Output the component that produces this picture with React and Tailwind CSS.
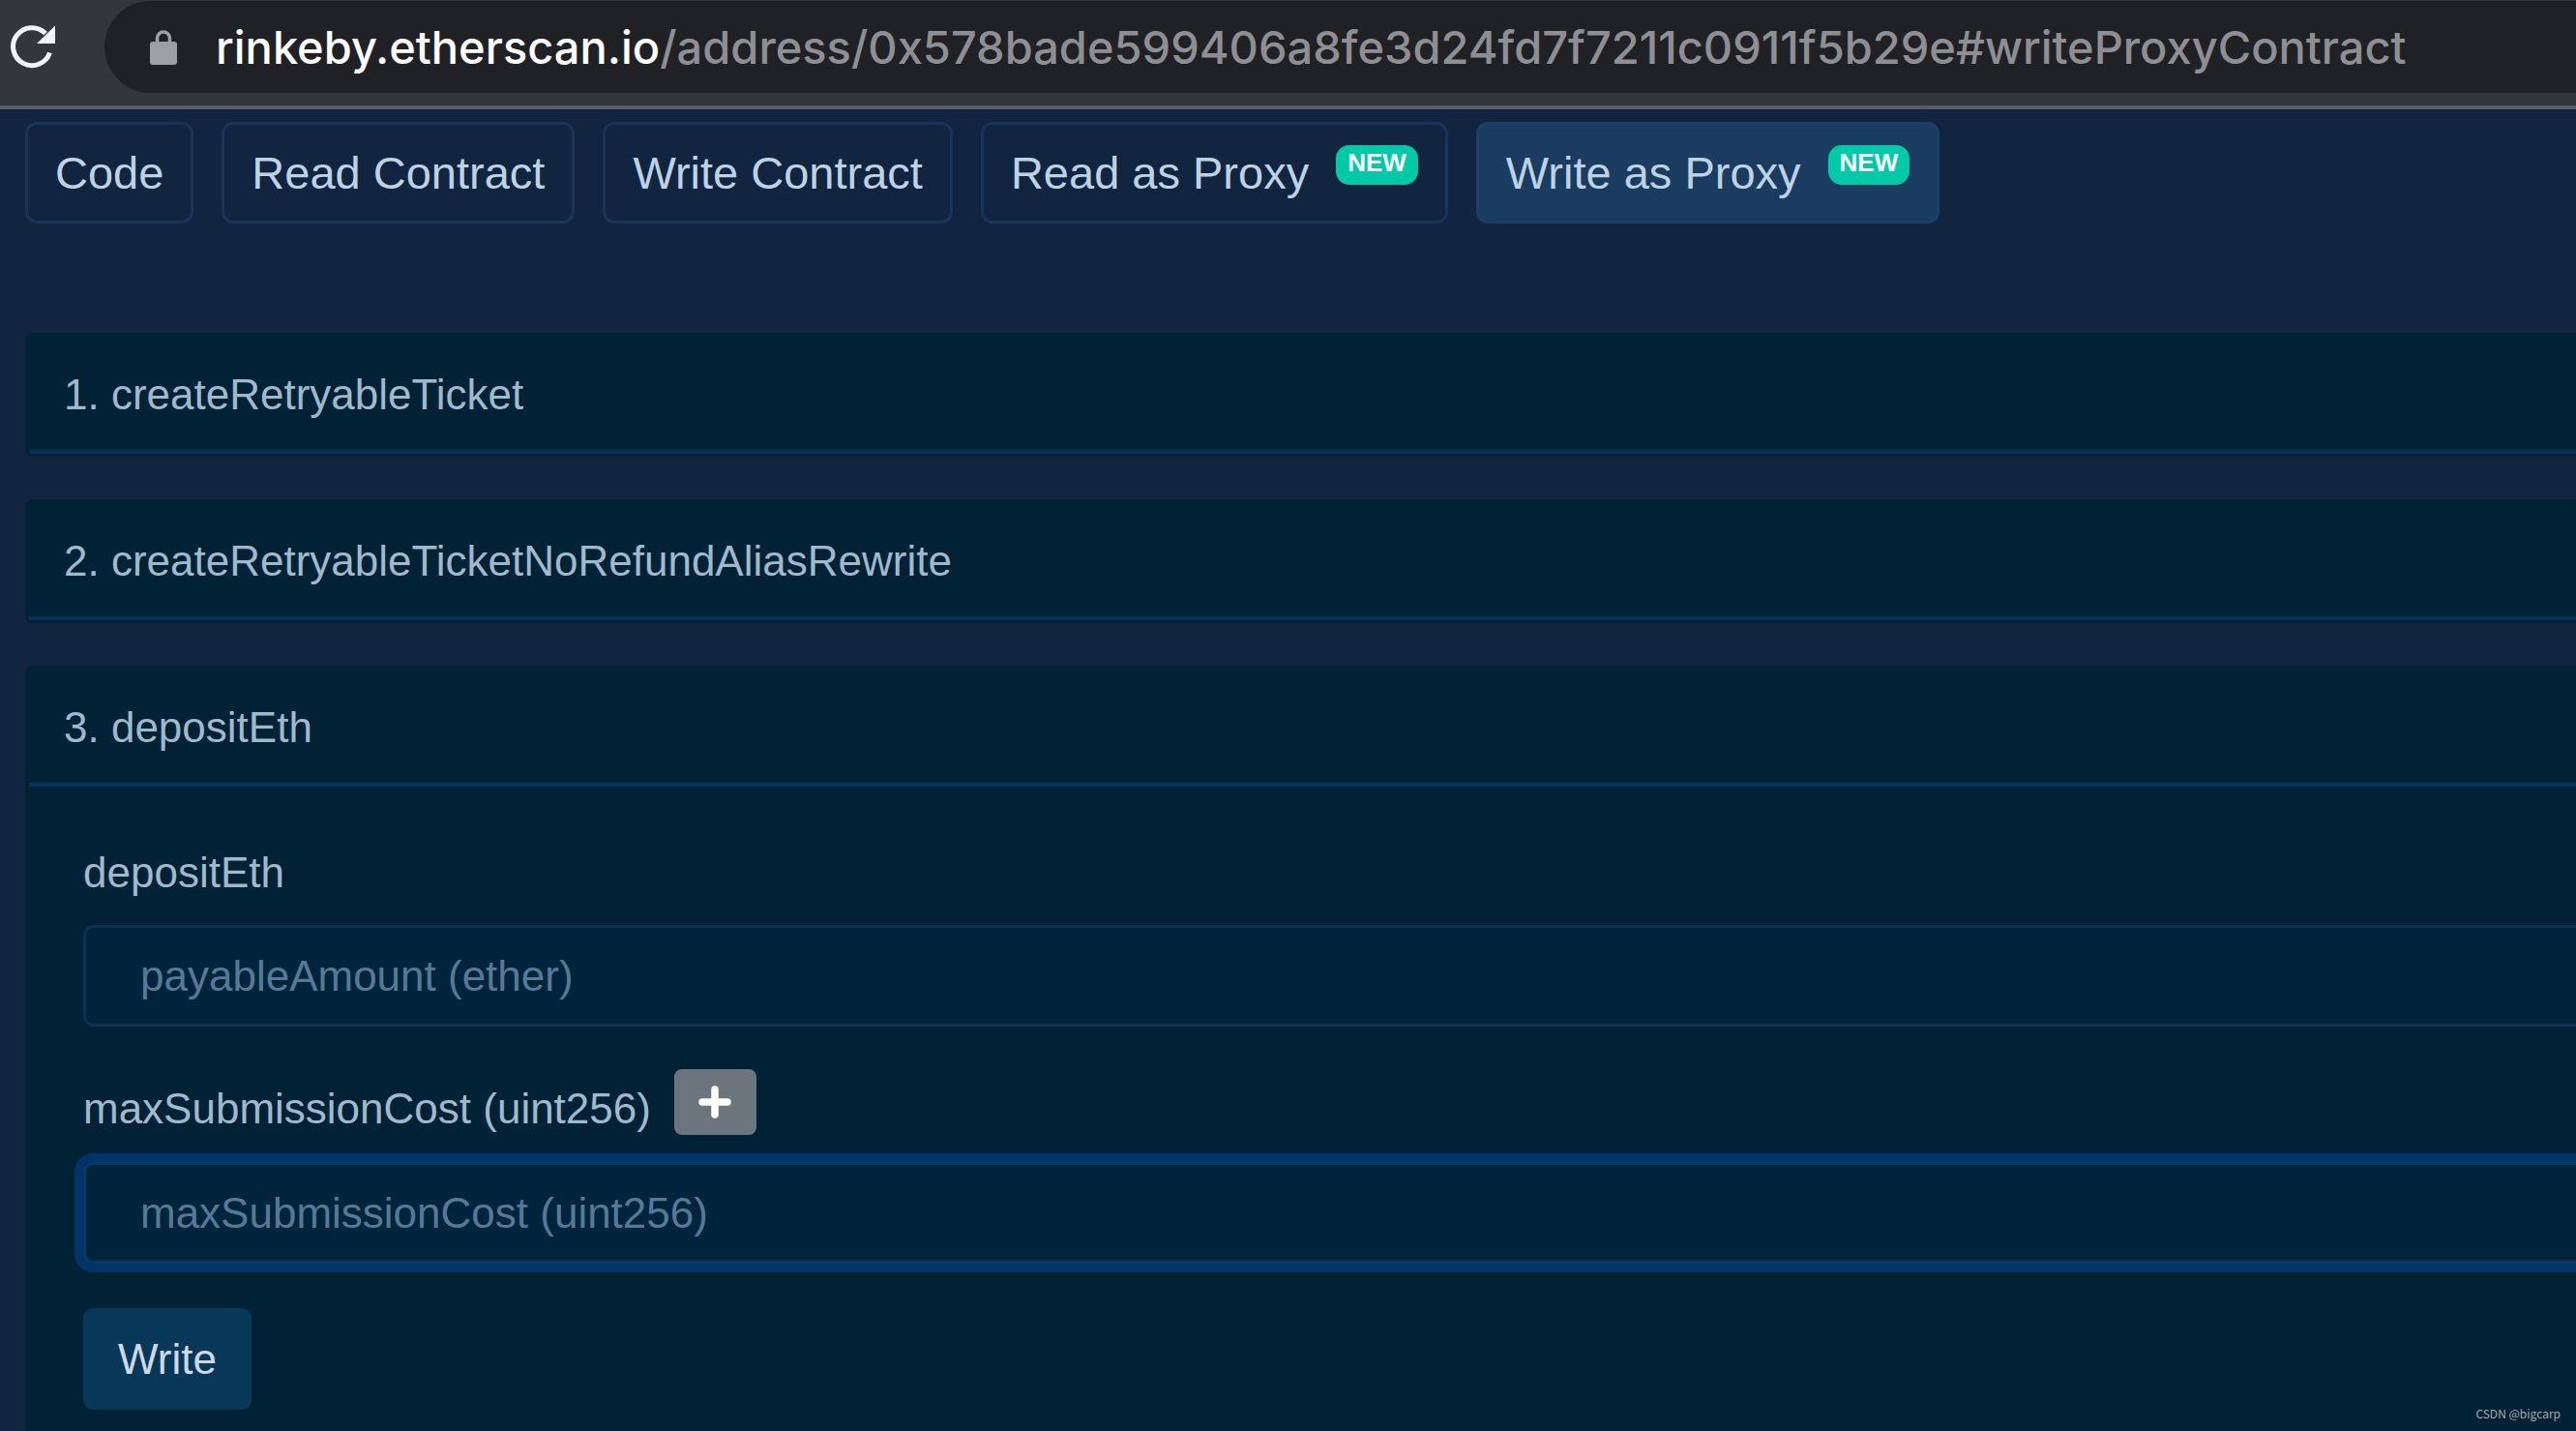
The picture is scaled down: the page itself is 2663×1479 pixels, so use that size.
import React from "react";

const tabs = [
  { label: "Code" },
  { label: "Read Contract" },
  { label: "Write Contract" },
  { label: "Read as Proxy", isNew: true },
  { label: "Write as Proxy", isNew: true, active: true },
];

function ReloadIcon() {
  return (
    <svg viewBox="0 0 48 48" className="h-12 w-12" fill="none" aria-hidden="true">
      <path d="M41.500 29.500 A19.500 19.500 0 1 1 37 9.500" stroke="#f1f3f4" strokeWidth="5" />
      <path d="M47 1.500 V20 H28 Z" fill="#f1f3f4" />
    </svg>
  );
}

function LockIcon() {
  return (
    <svg viewBox="0 0 28 36" className="h-9 w-7" fill="none" aria-hidden="true">
      <path d="M7.500 14 V8.500 a6.500 6.500 0 0 1 13 0 V14" stroke="#9aa0a6" strokeWidth="3.500" />
      <rect x="0" y="12" width="28" height="24" rx="3" fill="#9aa0a6" />
    </svg>
  );
}

function AddressBar() {
  return (
    <header className="flex h-[113px] items-start border-b-4 border-[#5c5b63] bg-[#35363a] pt-px">
      <button type="button" aria-label="Reload" className="flex h-[95px] w-[108px] items-center pl-2.5">
        <ReloadIcon />
      </button>
      <div className="flex h-[95px] min-w-0 flex-1 items-center gap-10 overflow-hidden rounded-l-full bg-[#202124] pl-[47px]">
        <LockIcon />
        <p className="font-['Inter',sans-serif] text-[47px] leading-none font-medium whitespace-nowrap text-[#8e8f92]">
          <span className="text-white">rinkeby.etherscan.io</span>
          /address/0x578bade599406a8fe3d24fd7f7211c0911f5b29e#writeProxyContract
        </p>
      </div>
    </header>
  );
}

function Tab({ label, isNew, active }) {
  return (
    <button
      type="button"
      className={
        "flex h-[105px] items-center gap-7 rounded-xl border-3 px-7 text-[47px] leading-none text-[#bdd2e4] " +
        (active ? "border-[#1c3f66] bg-[#1a3c60]" : "border-[#1b3358]")
      }
    >
      {label}
      {isNew && (
        <span className="mb-4 flex h-[41px] items-center rounded-[14px] bg-[#00c9a7] px-3 pb-1.5 text-[26px] leading-none font-bold text-white">
          NEW
        </span>
      )}
    </button>
  );
}

function Heading({ children }) {
  return (
    <h2 className="ml-1 flex h-[125px] items-center border-b-4 border-[#04325a] pt-1.5 pl-9 text-[44px] leading-none">
      {children}
    </h2>
  );
}

const field =
  "block h-[105px] w-full rounded-l-[10px] border-3 border-r-0 bg-[#01243d] px-14 text-[44px] outline-none placeholder:text-[#557a95]";

export default function App() {
  return (
    <div className="relative flex min-h-screen flex-col overflow-hidden bg-[#112541] font-['Liberation_Sans',sans-serif] text-[#9fb9cd]">
      <AddressBar />
      <nav className="flex gap-[29px] pt-[13px] pl-[26px]">
        {tabs.map((tab) => (
          <Tab key={tab.label} {...tab} />
        ))}
      </nav>
      <main className="flex flex-1 flex-col gap-11 pt-[113px] pl-[26px]">
        <section className="rounded-l-lg bg-[#012135] pb-[3px]">
          <Heading>1. createRetryableTicket</Heading>
        </section>
        <section className="rounded-l-lg bg-[#012135] pb-[3px]">
          <Heading>2. createRetryableTicketNoRefundAliasRewrite</Heading>
        </section>
        <section className="flex-1 rounded-tl-lg bg-[#012135]">
          <Heading>3. depositEth</Heading>
          <form className="pt-[63px] pb-[21px] pl-[60px]" onSubmit={(e) => e.preventDefault()}>
            <label htmlFor="payable" className="block text-[44px] leading-[52px]">
              depositEth
            </label>
            <input id="payable" placeholder="payableAmount (ether)" className={field + " mt-7 border-[#0b3354]"} />
            <div className="mt-11 flex h-[68px] items-center gap-6">
              <label htmlFor="cost" className="pt-3.5 text-[44px] leading-[52px]">
                maxSubmissionCost (uint256)
              </label>
              <button
                type="button"
                aria-label="Add zeros"
                className="flex h-[68px] w-[85px] items-center justify-center rounded-lg bg-[#6c757d]"
              >
                <svg viewBox="0 0 34 34" className="h-[34px] w-[34px]" aria-hidden="true">
                  <path d="M17 4 V30 M4 17 H30" stroke="#fff" strokeWidth="7.500" strokeLinecap="round" />
                </svg>
              </button>
            </div>
            <input
              id="cost"
              placeholder="maxSubmissionCost (uint256)"
              className={field + " mt-7 border-[#053966] ring-9 ring-[#003468]"}
            />
            <button
              type="submit"
              className="mt-[46px] flex h-[105px] items-center rounded-[10px] bg-[#083858] px-9 text-[44px] leading-none text-[#ced9e6]"
            >
              Write
            </button>
          </form>
        </section>
      </main>
      <p className="absolute right-4 bottom-2 font-['Noto_Sans_CJK_SC',sans-serif] text-[12px] leading-5 text-[#a3abb2]">
        CSDN @bigcarp
      </p>
    </div>
  );
}
